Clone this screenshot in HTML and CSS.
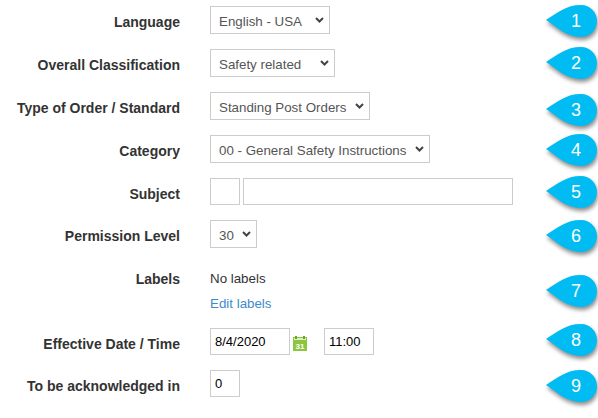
FILE: index.html
```html
<!DOCTYPE html>
<html>
<head>
    <title>Order Details</title>
    <link rel="stylesheet" href="styles.css">
</head>
<body>
    <div class="page">
        <form class="order-form">
            <div class="form-row">
                <label>Language</label>
                <select class="w-language"><option>English - USA</option></select>
            </div>
            <div class="form-row">
                <label>Overall Classification</label>
                <select class="w-class"><option>Safety related</option></select>
            </div>
            <div class="form-row">
                <label>Type of Order / Standard</label>
                <select class="w-type"><option>Standing Post Orders</option></select>
            </div>
            <div class="form-row">
                <label>Category</label>
                <select class="w-category"><option>00 - General Safety Instructions</option></select>
            </div>
            <div class="form-row">
                <label>Subject</label>
                <div class="field-group">
                    <input type="text" class="w-short">
                    <input type="text" class="w-subject">
                </div>
            </div>
            <div class="form-row">
                <label>Permission Level</label>
                <select class="w-level"><option>30</option></select>
            </div>
            <div class="form-row row-labels">
                <label>Labels</label>
                <div class="labels-box">
                    <div>No labels</div>
                    <a href="#" class="edit-link">Edit labels</a>
                </div>
            </div>
            <div class="form-row row-low">
                <label>Effective Date / Time</label>
                <div class="field-group">
                    <input type="text" class="w-date" value="8/4/2020">
                    <svg class="cal-icon" width="14" height="15" viewBox="0 0 14 15">
                        <rect x="0" y="1" width="14" height="14" fill="#8cc63f"/>
                        <rect x="1" y="2" width="12" height="2" fill="#dcefc4"/>
                        <rect x="2" y="0" width="2" height="3" fill="#6fa52c"/>
                        <rect x="10" y="0" width="2" height="3" fill="#6fa52c"/>
                        <text x="7" y="13" class="cal-num">31</text>
                    </svg>
                    <input type="text" class="w-time" value="11:00">
                </div>
            </div>
            <div class="form-row row-low">
                <label>To be acknowledged in</label>
                <input type="text" class="w-short" value="0">
            </div>
        </form>

        <!-- numbered callouts sit on top of the form -->
        <div class="callout c1"><svg viewBox="0 0 52 34"><path d="M1 16 C12 9 21 1 36 1 C45 1 52 8 52 17 C52 26 45 33 36 33 C21 33 12 23 1 16 Z"/></svg><span>1</span></div>
        <div class="callout c2"><svg viewBox="0 0 52 34"><path d="M1 16 C12 9 21 1 36 1 C45 1 52 8 52 17 C52 26 45 33 36 33 C21 33 12 23 1 16 Z"/></svg><span>2</span></div>
        <div class="callout c3"><svg viewBox="0 0 52 34"><path d="M1 16 C12 9 21 1 36 1 C45 1 52 8 52 17 C52 26 45 33 36 33 C21 33 12 23 1 16 Z"/></svg><span>3</span></div>
        <div class="callout c4"><svg viewBox="0 0 52 34"><path d="M1 16 C12 9 21 1 36 1 C45 1 52 8 52 17 C52 26 45 33 36 33 C21 33 12 23 1 16 Z"/></svg><span>4</span></div>
        <div class="callout c5"><svg viewBox="0 0 52 34"><path d="M1 16 C12 9 21 1 36 1 C45 1 52 8 52 17 C52 26 45 33 36 33 C21 33 12 23 1 16 Z"/></svg><span>5</span></div>
        <div class="callout c6"><svg viewBox="0 0 52 34"><path d="M1 16 C12 9 21 1 36 1 C45 1 52 8 52 17 C52 26 45 33 36 33 C21 33 12 23 1 16 Z"/></svg><span>6</span></div>
        <div class="callout c7"><svg viewBox="0 0 52 34"><path d="M1 16 C12 9 21 1 36 1 C45 1 52 8 52 17 C52 26 45 33 36 33 C21 33 12 23 1 16 Z"/></svg><span>7</span></div>
        <div class="callout c8"><svg viewBox="0 0 52 34"><path d="M1 16 C12 9 21 1 36 1 C45 1 52 8 52 17 C52 26 45 33 36 33 C21 33 12 23 1 16 Z"/></svg><span>8</span></div>
        <div class="callout c9"><svg viewBox="0 0 52 34"><path d="M1 16 C12 9 21 1 36 1 C45 1 52 8 52 17 C52 26 45 33 36 33 C21 33 12 23 1 16 Z"/></svg><span>9</span></div>
    </div>
</body>
</html>
```
FILE: styles.css
```css
html, body {
    margin: 0;
    padding: 0;
    background-color: #fff;
}
.page {
    position: relative;
    width: 598px;
    height: 418px;
    overflow: hidden;
    font-family: 'Liberation Sans', Arial, sans-serif;
    font-size: 13.33px;
    color: #333;
}
.order-form {
    padding-top: 6px;
}
.form-row {
    display: flex;
    align-items: center;
    margin-bottom: 15px;
}
.row-labels {
    align-items: flex-start;
    box-sizing: border-box;
    height: 50px;
    padding-top: 8px;
}
.form-row label {
    box-sizing: border-box;
    width: 180px;
    margin-right: 30px;
    padding-top: 4px;
    text-align: right;
    font-size: 14px;
    font-weight: bold;
    flex-shrink: 0;
}
.row-labels label {
    padding-top: 0;
}
.row-low label {
    padding-top: 5px;
}
.field-group {
    display: flex;
    align-items: flex-start;
}
select, input[type="text"] {
    box-sizing: border-box;
    border: 1px solid #ccc;
    border-radius: 0;
    background-color: #fff;
    font-family: inherit;
    outline: none;
}
select {
    appearance: none;
    height: 28px;
    padding: 3px 0 0 8px;
    font-size: 13.33px;
    color: #555;
    background-image: url("data:image/svg+xml,%3Csvg xmlns='http://www.w3.org/2000/svg' width='9' height='6'%3E%3Cpath d='M1 1l3.5 3.5L8 1' fill='none' stroke='%23444' stroke-width='2'/%3E%3C/svg%3E");
    background-repeat: no-repeat;
    background-position: right 5px top 10px;
}
input[type="text"] {
    height: 27px;
    padding: 0 4px;
    font-size: 13px;
    color: #000;
}
.w-language { width: 120px; }
.w-class { width: 125px; }
.w-type { width: 160px; }
.w-category { width: 220px; }
.w-level { width: 47px; }
.w-short { width: 30px; }
.w-subject { width: 270px; margin-left: 3px; }
.w-date { width: 80px; }
.w-time { width: 50px; margin-left: 17px; }
.cal-icon {
    margin: 8px 0 0 3px;
}
.cal-num {
    font-size: 8px;
    font-weight: bold;
    fill: #fff;
    text-anchor: middle;
}
.labels-box {
    line-height: 16px;
}
.edit-link {
    display: block;
    margin-top: 9px;
    color: #428bca;
    text-decoration: none;
}
.callout {
    position: absolute;
    left: 545px;
    width: 52px;
    height: 34px;
}
.callout svg {
    display: block;
    width: 52px;
    height: 34px;
    fill: #00bcf2;
    filter: drop-shadow(1px 3px 2px rgba(0, 0, 0, 0.45));
}
.callout span {
    position: absolute;
    left: 10px;
    right: 0;
    top: 0;
    line-height: 34px;
    text-align: center;
    color: #fff;
    font-size: 18px;
}
.c1 { top: 4px; }
.c2 { top: 46px; }
.c3 { top: 93px; }
.c4 { top: 133px; }
.c5 { top: 175px; }
.c6 { top: 219px; }
.c7 { top: 274px; }
.c8 { top: 323px; }
.c9 { top: 369px; }
```
